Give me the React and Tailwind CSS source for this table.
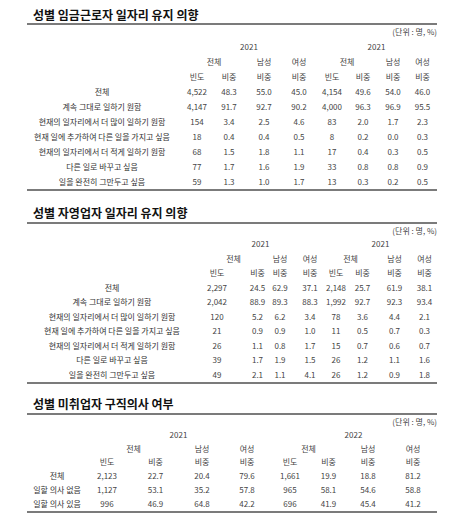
import React from "react";

const HEAD = ["빈도", "비중", "비중", "비중", "빈도", "비중", "비중", "비중"];

const sections = [
  {
    title: "성별 임금근로자 일자리 유지 의향",
    years: ["2021", "2021"],
    cols: "grid-cols-[155px_30px_34px_36px_34px_32px_30px_30px_29px]",
    rowH: "auto-rows-[15px]",
    titleBox: "pt-[8px] pb-[1px]",
    unitBox: "h-[14px]",
    labelPad: "pr-[5px]",
    shift: ["", "", "", "", "", "", "", ""],
    rows: [
      ["전체", "4,522", "48.3", "55.0", "45.0", "4,154", "49.6", "54.0", "46.0"],
      ["계속 그대로 일하기 원함", "4,147", "91.7", "92.7", "90.2", "4,000", "96.3", "96.9", "95.5"],
      ["현재의 일자리에서 더 많이 일하기 원함", "154", "3.4", "2.5", "4.6", "83", "2.0", "1.7", "2.3"],
      ["현재 일에 추가하여 다른 일을 가지고 싶음", "18", "0.4", "0.4", "0.5", "8", "0.2", "0.0", "0.3"],
      ["현재의 일자리에서 더 적게 일하기 원함", "68", "1.5", "1.8", "1.1", "17", "0.4", "0.3", "0.5"],
      ["다른 일로 바꾸고 싶음", "77", "1.7", "1.6", "1.9", "33", "0.8", "0.8", "0.9"],
      ["일을 완전히 그만두고 싶음", "59", "1.3", "1.0", "1.7", "13", "0.3", "0.2", "0.5"],
    ],
  },
  {
    title: "성별 자영업자 일자리 유지 의향",
    years: ["2021", "2021"],
    cols: "grid-cols-[170px_40px_33px_20px_34px_24px_29px_35px_25px]",
    rowH: "auto-rows-[14.5px]",
    titleBox: "pt-[15px] pb-[2px]",
    unitBox: "h-[13px]",
    labelPad: "",
    shift: ["", "pl-[8px]", "", "pl-[6px]", "", "", "", ""],
    rows: [
      ["전체", "2,297", "24.5", "62.9", "37.1", "2,148", "25.7", "61.9", "38.1"],
      ["계속 그대로 일하기 원함", "2,042", "88.9", "89.3", "88.3", "1,992", "92.7", "92.3", "93.4"],
      ["현재의 일자리에서 더 많이 일하기 원함", "120", "5.2", "6.2", "3.4", "78", "3.6", "4.4", "2.1"],
      ["현재 일에 추가하여 다른 일을 가지고 싶음", "21", "0.9", "0.9", "1.0", "11", "0.5", "0.7", "0.3"],
      ["현재의 일자리에서 더 적게 일하기 원함", "26", "1.1", "0.8", "1.7", "15", "0.7", "0.6", "0.7"],
      ["다른 일로 바꾸고 싶음", "39", "1.7", "1.9", "1.5", "26", "1.2", "1.1", "1.6"],
      ["일을 완전히 그만두고 싶음", "49", "2.1", "1.1", "4.1", "26", "1.2", "0.9", "1.8"],
    ],
  },
  {
    title: "성별 미취업자 구직의사 여부",
    years: ["2021", "2022"],
    cols: "grid-cols-[60px_40px_53px_44px_46px_40px_37px_42px_48px]",
    rowH: "auto-rows-[13.8px]",
    titleBox: "pt-[13px] pb-[2px]",
    unitBox: "h-[13px]",
    labelPad: "",
    shift: ["", "pl-[4px]", "", "", "", "", "", ""],
    rows: [
      ["전체", "2,123", "22.7", "20.4", "79.6", "1,661", "19.9", "18.8", "81.2"],
      ["일할 의사 없음", "1,127", "53.1", "35.2", "57.8", "965", "58.1", "54.6", "58.8"],
      ["일할 의사 있음", "996", "46.9", "64.8", "42.2", "696", "41.9", "45.4", "41.2"],
    ],
  },
];

function Section({ s }) {
  return (
    <div className="w-[410px]">
      <div className={`${s.titleBox} pl-[6px]`}>
        <h2 className="text-[12px] leading-[14px] font-bold text-[#111]">{s.title}</h2>
      </div>
      <div className="h-[2px] bg-[#7b7b7b]" />
      <div className={`${s.unitBox} flex items-center justify-end text-[8px] leading-[10px] text-[#444]`}>
        (단위 : 명, %)
      </div>

      <div className={`grid ${s.cols} ${s.rowH} items-center text-[8px] leading-[10px] text-[#444] text-center whitespace-nowrap`}>
        {/* 연도 */}
        <div />
        <div className="col-span-4">{s.years[0]}</div>
        <div className="col-span-4">{s.years[1]}</div>

        {/* 성별 */}
        <div />
        <div className="col-span-2">전체</div>
        <div className={s.shift[2]}>남성</div>
        <div className={s.shift[3]}>여성</div>
        <div className="col-span-2">전체</div>
        <div className={s.shift[6]}>남성</div>
        <div className={s.shift[7]}>여성</div>

        <div />
        {HEAD.map((h, i) => (
          <div key={i} className={s.shift[i]}>{h}</div>
        ))}

        {s.rows.map((r) => (
          <React.Fragment key={r[0]}>
            <div className={`${s.labelPad} text-[#333]`}>{r[0]}</div>
            {r.slice(1).map((v, i) => (
              <div key={i} className={s.shift[i]}>{v}</div>
            ))}
          </React.Fragment>
        ))}
      </div>
      <div className="h-[2px] bg-[#7b7b7b]" />
    </div>
  );
}

export default function App() {
  return (
    <div className="w-[474px] h-[526px] bg-white pl-[27px] font-['Noto_Sans_CJK_KR','Noto_Sans',sans-serif] overflow-hidden">
      {sections.map((s) => (
        <Section key={s.title} s={s} />
      ))}
    </div>
  );
}
